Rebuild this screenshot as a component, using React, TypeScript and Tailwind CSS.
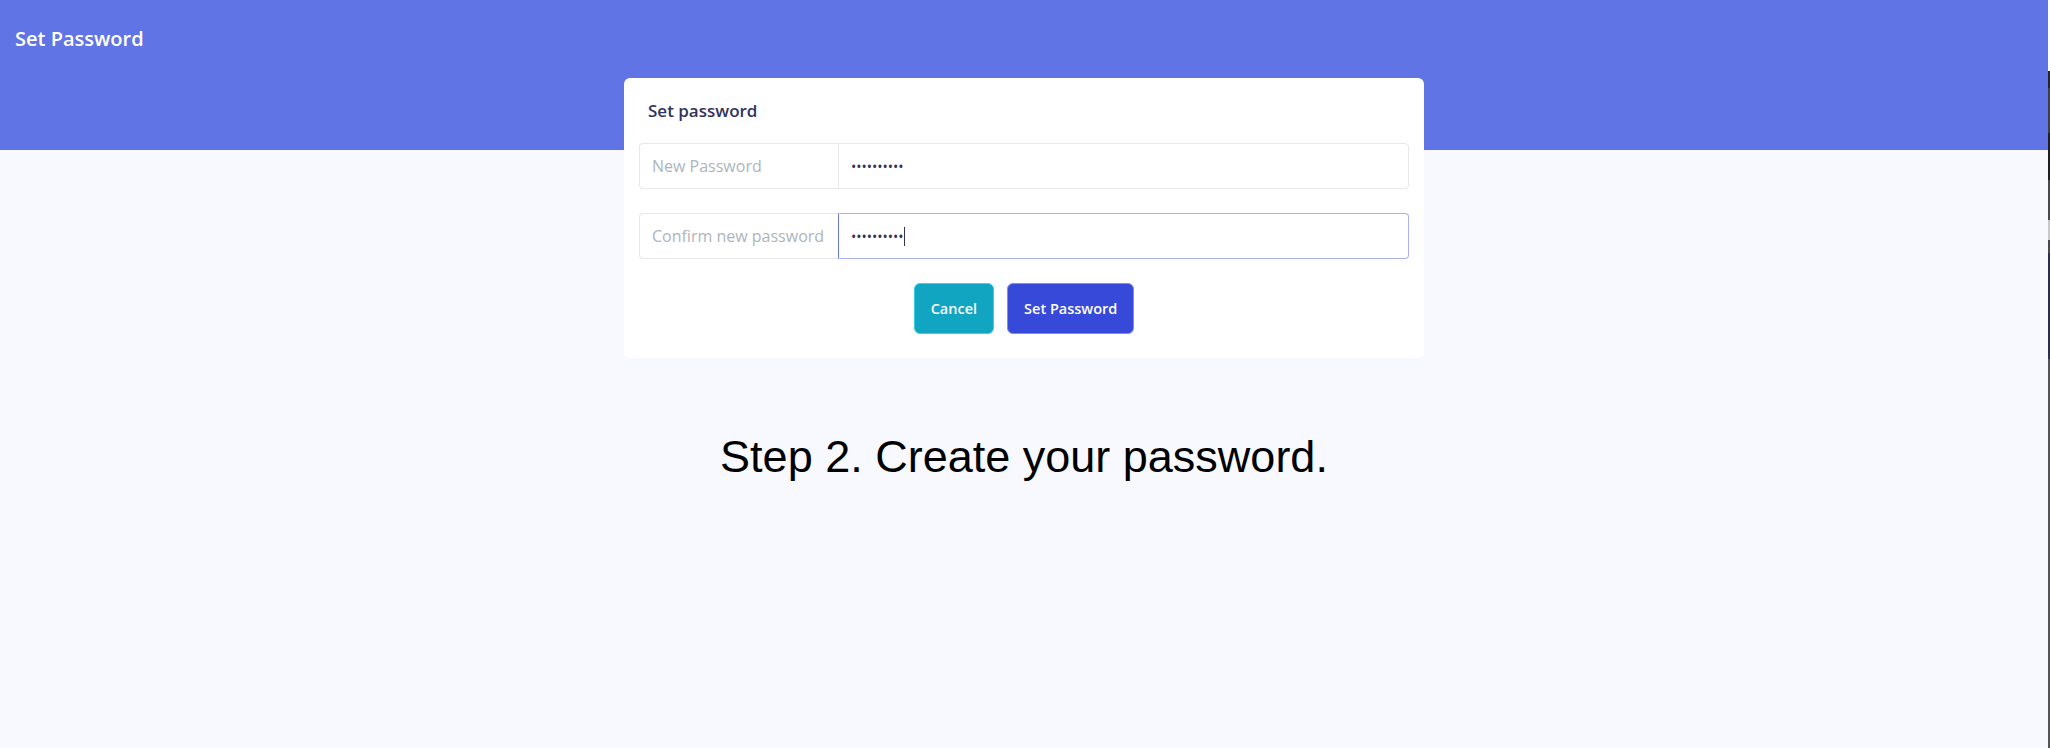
export default function App() {
  return (
    <div className="flex h-[748px] w-full overflow-hidden">
      <main className="flex-1 bg-[#f8f9fe] font-['Open_Sans',sans-serif]">
        <header className="h-[150px] bg-[#6174e6] pl-[15px] pt-[25px]">
          <h1 className="text-[20px] leading-[28px] font-semibold text-white">Set Password</h1>
        </header>
        <div className="-mt-[72px] flex flex-col items-center">
          <div className="w-[800px] rounded-[6px] bg-white px-[15px] pt-[21px] pb-[24px]">
            <h2 className="px-[9px] text-[17px] leading-[24px] font-semibold text-[#32325d]">Set password</h2>
            <div className="mt-[20px] flex h-[46px]">
              <div className="flex w-[199px] items-center rounded-l-[4px] border border-r-0 border-[#e6e8ec] px-[12px] text-[16px] text-[#adb5bd]">
                New Password
              </div>
              <div className="flex flex-1 items-center rounded-r-[4px] border border-[#e6e8ec] px-[12px] text-[14px] text-[#32325d]">
                <span>••••••••••</span>
              </div>
            </div>
            <div className="mt-[24px] flex h-[46px]">
              <div className="flex w-[199px] items-center rounded-l-[4px] border border-r-0 border-[#e6e8ec] px-[12px] text-[16px] text-[#adb5bd]">
                Confirm new password
              </div>
              <div className="flex flex-1 items-center rounded-r-[4px] border border-[#aab2f2] border-l-[#6b7ae8] px-[12px] text-[14px] text-[#32325d]">
                <span>••••••••••</span>
                <span className="h-[19px] w-px bg-[#32325d]" />
              </div>
            </div>
            <div className="mt-[24px] flex justify-center gap-[13px]">
              <button className="h-[51px] rounded-[6px] border border-[#3ad1ea] bg-[#11a5c1] px-[16px] text-[14.5px] font-semibold text-white">
                Cancel
              </button>
              <button className="h-[51px] rounded-[6px] border border-[#7e8cf0] bg-[#3649d8] px-[16px] text-[14.5px] font-semibold text-white">
                Set Password
              </button>
            </div>
          </div>
          <p className="mt-[76px] text-center font-['Liberation_Sans',Arial,sans-serif] text-[45px] leading-[45px] text-black">
            Step 2. Create your password.
          </p>
        </div>
      </main>
      <div className="flex w-[2px] flex-col">
        <div className="h-[71px] bg-white" />
        <div className="h-[17px] bg-[#252527]" />
        <div className="h-[45px] bg-[#3d3f40]" />
        <div className="h-[47px] bg-[#1f1f21]" />
        <div className="h-[40px] bg-[#4a4a4c]" />
        <div className="h-[20px] bg-[#c8c8ca]" />
        <div className="h-[13px] bg-[#4a4a4c]" />
        <div className="h-[106px] bg-[#2c2e4c]" />
        <div className="flex-1 bg-[#555557]" />
      </div>
    </div>
  );
}
